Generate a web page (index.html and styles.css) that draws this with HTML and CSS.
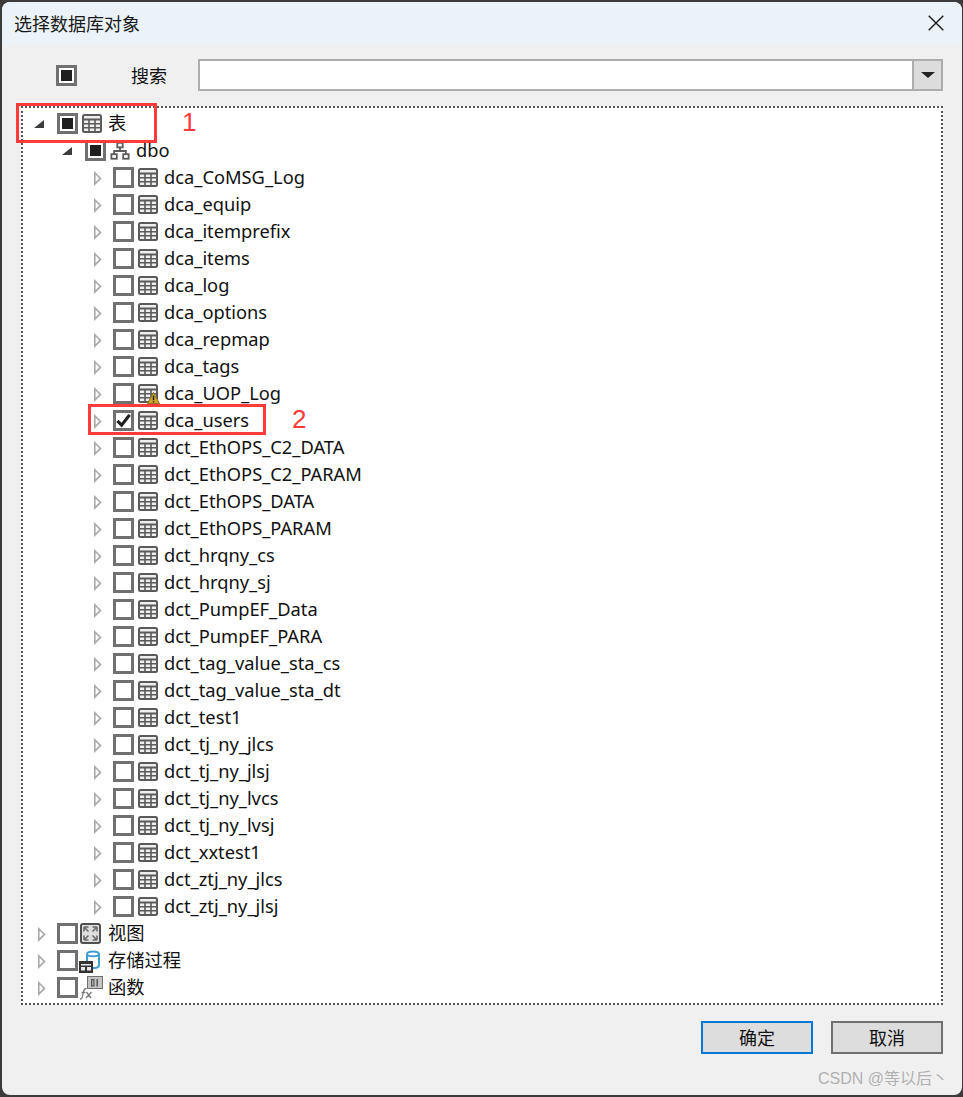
FILE: index.html
```html
<!DOCTYPE html>
<html lang="zh">
<head>
<meta charset="utf-8">
<title>选择数据库对象</title>
<link rel="stylesheet" href="styles.css">
</head>
<body>
<svg class="sprite" aria-hidden="true">
  <symbol id="open" viewBox="0 0 16 16"><path d="M12 4v8H2z" fill="#3c3c3c"/></symbol>
  <symbol id="closed" viewBox="0 0 16 16"><path d="M6.800 2.800 12.500 8.400 6.800 14z" fill="#fff" stroke="#a8a8a8" stroke-width="1.600"/></symbol>
  <symbol id="table" viewBox="0 0 20 20"><rect x="1" y="1" width="18" height="17" rx="1.500" fill="#efefef" stroke="#5a5a5a" stroke-width="2"/><path d="M1 5.500h18" stroke="#5a5a5a" stroke-width="2"/><path d="M1 9.800h18M1 13.800h18M7 5v13M13 5v13" stroke="#5a5a5a" stroke-width="1.600" fill="none"/></symbol>
  <symbol id="schema" viewBox="0 0 22 20"><g fill="#fff" stroke="#5c5c5c" stroke-width="2"><rect x="8" y="1" width="6" height="5"/><rect x="1.500" y="13.500" width="6" height="5"/><rect x="14.500" y="13.500" width="6" height="5"/><path d="M11 6v4M4.500 13.500V10h13v3.500" fill="none"/></g></symbol>
  <symbol id="warn" viewBox="0 0 14 13"><path d="M7 .5 13.500 12.500H.5z" fill="#d0a52a" stroke="#8a6a14"/><path d="M6.200 4h1.600v5H6.200zM6.200 10h1.600v1.500H6.200z" fill="#222"/></symbol>
  <symbol id="view" viewBox="0 0 24 24"><rect x="2" y="2" width="19" height="19" rx="2" fill="#dedede" stroke="#4f4f4f" stroke-width="2"/><path d="M5 5l4.500 4.500M5 5h4.500M5 5v4.500M18 5l-4.500 4.500M18 5h-4.500M18 5v4.500M5 18l4.500-4.500M5 18h4.500M5 18v-4.500M18 18l-4.500-4.500M18 18h-4.500M18 18v-4.500" fill="none" stroke="#6a6a6a" stroke-width="1.600"/></symbol>
  <symbol id="proc" viewBox="0 0 24 24"><path d="M8 5C8 1.500 20 1.500 20 5V16c0 2.500-3 3-5 3H8z" fill="#fff" stroke="#3f9ed1" stroke-width="2"/><path d="M8 5c0 3 12 3 12 0" fill="none" stroke="#3f9ed1" stroke-width="2"/><rect x="0" y="12" width="14" height="12" fill="#333"/><path fill="#e8e8e8" d="M2 15h10v1.500H2zM2 18h4v3.500H2zM8 18h4v3.500H8z"/></symbol>
  <symbol id="func" viewBox="0 0 24 24"><rect x="8.500" y=".5" width="15" height="12" fill="#c4c4c4" stroke="#6f6f6f"/><path d="M12 3h3.500v7.500H12zM13.200 4.300v5h1.100v-5zM17.500 3H19v7.500h-1.500z" fill="#555" fill-rule="evenodd"/><path d="M1 23c2 0 2.200-1 2.700-4L4.700 15c.4-1.600 1.200-2.500 2.800-2.500M2.500 16.500h4M7.500 16l4.500 6M12.500 16l-5.500 6" fill="none" stroke="#7a7a7a" stroke-width="1.300"/></symbol>
  <symbol id="tick" viewBox="0 0 16 16"><path d="M1.500 8.500 6 13l8.500-11" fill="none" stroke="#1f1f1f" stroke-width="3.400"/></symbol>
</svg>

<div class="window">
  <header class="titlebar">
    <span class="title">选择数据库对象</span>
    <svg class="close" viewBox="0 0 16 16"><path d="M.7.7l14.600 14.600M15.300.7.700 15.300" stroke="#1a1a1a" stroke-width="1.400" fill="none"/></svg>
  </header>

  <div class="search">
    <span class="check partial"></span>
    <span class="search-label">搜索</span>
    <div class="combo">
      <span class="combo-input"></span>
      <span class="combo-btn"><span class="caret"></span></span>
    </div>
  </div>

  <div class="tree">
    <div class="row lvl0"><svg class="arrow"><use href="#open"/></svg><span class="check partial"></span><svg class="ico"><use href="#table"/></svg><span class="name">表</span></div>
    <div class="row lvl1"><svg class="arrow"><use href="#open"/></svg><span class="check partial"></span><svg class="ico"><use href="#schema"/></svg><span class="name">dbo</span></div>
    <div class="row lvl2"><svg class="arrow"><use href="#closed"/></svg><span class="check"></span><svg class="ico"><use href="#table"/></svg><span class="name">dca_CoMSG_Log</span></div>
    <div class="row lvl2"><svg class="arrow"><use href="#closed"/></svg><span class="check"></span><svg class="ico"><use href="#table"/></svg><span class="name">dca_equip</span></div>
    <div class="row lvl2"><svg class="arrow"><use href="#closed"/></svg><span class="check"></span><svg class="ico"><use href="#table"/></svg><span class="name">dca_itemprefix</span></div>
    <div class="row lvl2"><svg class="arrow"><use href="#closed"/></svg><span class="check"></span><svg class="ico"><use href="#table"/></svg><span class="name">dca_items</span></div>
    <div class="row lvl2"><svg class="arrow"><use href="#closed"/></svg><span class="check"></span><svg class="ico"><use href="#table"/></svg><span class="name">dca_log</span></div>
    <div class="row lvl2"><svg class="arrow"><use href="#closed"/></svg><span class="check"></span><svg class="ico"><use href="#table"/></svg><span class="name">dca_options</span></div>
    <div class="row lvl2"><svg class="arrow"><use href="#closed"/></svg><span class="check"></span><svg class="ico"><use href="#table"/></svg><span class="name">dca_repmap</span></div>
    <div class="row lvl2"><svg class="arrow"><use href="#closed"/></svg><span class="check"></span><svg class="ico"><use href="#table"/></svg><span class="name">dca_tags</span></div>
    <div class="row lvl2"><svg class="arrow"><use href="#closed"/></svg><span class="check"></span><span class="ico-wrap"><svg class="ico"><use href="#table"/></svg><svg class="warn"><use href="#warn"/></svg></span><span class="name">dca_UOP_Log</span></div>
    <div class="row lvl2"><svg class="arrow"><use href="#closed"/></svg><span class="check checked"><svg class="tick"><use href="#tick"/></svg></span><svg class="ico"><use href="#table"/></svg><span class="name">dca_users</span></div>
    <div class="row lvl2"><svg class="arrow"><use href="#closed"/></svg><span class="check"></span><svg class="ico"><use href="#table"/></svg><span class="name">dct_EthOPS_C2_DATA</span></div>
    <div class="row lvl2"><svg class="arrow"><use href="#closed"/></svg><span class="check"></span><svg class="ico"><use href="#table"/></svg><span class="name">dct_EthOPS_C2_PARAM</span></div>
    <div class="row lvl2"><svg class="arrow"><use href="#closed"/></svg><span class="check"></span><svg class="ico"><use href="#table"/></svg><span class="name">dct_EthOPS_DATA</span></div>
    <div class="row lvl2"><svg class="arrow"><use href="#closed"/></svg><span class="check"></span><svg class="ico"><use href="#table"/></svg><span class="name">dct_EthOPS_PARAM</span></div>
    <div class="row lvl2"><svg class="arrow"><use href="#closed"/></svg><span class="check"></span><svg class="ico"><use href="#table"/></svg><span class="name">dct_hrqny_cs</span></div>
    <div class="row lvl2"><svg class="arrow"><use href="#closed"/></svg><span class="check"></span><svg class="ico"><use href="#table"/></svg><span class="name">dct_hrqny_sj</span></div>
    <div class="row lvl2"><svg class="arrow"><use href="#closed"/></svg><span class="check"></span><svg class="ico"><use href="#table"/></svg><span class="name">dct_PumpEF_Data</span></div>
    <div class="row lvl2"><svg class="arrow"><use href="#closed"/></svg><span class="check"></span><svg class="ico"><use href="#table"/></svg><span class="name">dct_PumpEF_PARA</span></div>
    <div class="row lvl2"><svg class="arrow"><use href="#closed"/></svg><span class="check"></span><svg class="ico"><use href="#table"/></svg><span class="name">dct_tag_value_sta_cs</span></div>
    <div class="row lvl2"><svg class="arrow"><use href="#closed"/></svg><span class="check"></span><svg class="ico"><use href="#table"/></svg><span class="name">dct_tag_value_sta_dt</span></div>
    <div class="row lvl2"><svg class="arrow"><use href="#closed"/></svg><span class="check"></span><svg class="ico"><use href="#table"/></svg><span class="name">dct_test1</span></div>
    <div class="row lvl2"><svg class="arrow"><use href="#closed"/></svg><span class="check"></span><svg class="ico"><use href="#table"/></svg><span class="name">dct_tj_ny_jlcs</span></div>
    <div class="row lvl2"><svg class="arrow"><use href="#closed"/></svg><span class="check"></span><svg class="ico"><use href="#table"/></svg><span class="name">dct_tj_ny_jlsj</span></div>
    <div class="row lvl2"><svg class="arrow"><use href="#closed"/></svg><span class="check"></span><svg class="ico"><use href="#table"/></svg><span class="name">dct_tj_ny_lvcs</span></div>
    <div class="row lvl2"><svg class="arrow"><use href="#closed"/></svg><span class="check"></span><svg class="ico"><use href="#table"/></svg><span class="name">dct_tj_ny_lvsj</span></div>
    <div class="row lvl2"><svg class="arrow"><use href="#closed"/></svg><span class="check"></span><svg class="ico"><use href="#table"/></svg><span class="name">dct_xxtest1</span></div>
    <div class="row lvl2"><svg class="arrow"><use href="#closed"/></svg><span class="check"></span><svg class="ico"><use href="#table"/></svg><span class="name">dct_ztj_ny_jlcs</span></div>
    <div class="row lvl2"><svg class="arrow"><use href="#closed"/></svg><span class="check"></span><svg class="ico"><use href="#table"/></svg><span class="name">dct_ztj_ny_jlsj</span></div>
    <div class="row lvl0"><svg class="arrow"><use href="#closed"/></svg><span class="check"></span><svg class="ico square"><use href="#view"/></svg><span class="name">视图</span></div>
    <div class="row lvl0"><svg class="arrow"><use href="#closed"/></svg><span class="check"></span><svg class="ico square"><use href="#proc"/></svg><span class="name">存储过程</span></div>
    <div class="row lvl0"><svg class="arrow"><use href="#closed"/></svg><span class="check"></span><svg class="ico square"><use href="#func"/></svg><span class="name">函数</span></div>
  </div>

  <footer class="actions">
    <button class="btn primary">确定</button>
    <button class="btn">取消</button>
  </footer>

  <div class="note box-one"></div>
  <span class="note-num num-one">1</span>
  <div class="note box-two"></div>
  <span class="note-num num-two">2</span>
  <span class="watermark">CSDN @等以后丶</span>
</div>
</body>
</html>
```
FILE: styles.css
```css
* { box-sizing: border-box; }
html, body { margin: 0; height: 100%; }
body {
  background: #3b3b3b;
  padding: 2px 1px 2px 2px;
  font-family: "Noto Sans", "Noto Sans CJK SC", sans-serif;
  font-size: 18.3px;
  color: #111;
  overflow: hidden;
}
.sprite { display: none; }
.window {
  position: relative;
  height: 1093px;
  background: #f0f0f0;
  border-radius: 8px;
  overflow: hidden;
  display: flex;
  flex-direction: column;
}
.titlebar {
  height: 43px;
  flex: none;
  background: #ebf3f9;
  display: flex;
  align-items: center;
  justify-content: space-between;
  padding: 0 18px 2px 12px;
}
.title { font-family: "Noto Sans CJK SC", sans-serif; font-size: 18px; color: #1a1a1a; }
.close { width: 16px; height: 16px; }
.search {
  display: flex;
  align-items: center;
  padding: 14px 19px 0 54px;
  flex: none;
}
.search-label { font-family: "Noto Sans CJK SC", sans-serif; font-size: 18px; margin-left: 54px; width: 67px; }
.combo {
  flex: 1;
  height: 32px;
  display: flex;
  border: 2px solid #adadad;
  background: #fff;
}
.combo-input { flex: 1; }
.combo-btn {
  width: 29px;
  background: #dcdcdc;
  border-left: 2px solid #adadad;
  display: flex;
  align-items: center;
  justify-content: center;
}
.caret {
  width: 0;
  height: 0;
  border-left: 7px solid transparent;
  border-right: 7px solid transparent;
  border-top: 6px solid #222;
}
.tree {
  margin: 15px 19px 0 19px;
  height: 899px;
  flex: none;
  border: 2px dotted #555;
  background: #fff;
  padding-top: 2px;
  overflow: hidden;
}
.row { height: 27px; display: flex; align-items: center; }
.lvl0 { padding-left: 9px; }
.lvl1 { padding-left: 37px; }
.lvl2 { padding-left: 65px; }
.arrow { width: 16px; height: 16px; flex: none; margin-right: 9px; }
.check {
  width: 21px;
  height: 21px;
  flex: none;
  border: 3px solid #707070;
  background: #fff;
  display: flex;
  align-items: center;
  justify-content: center;
}
.check.partial::before {
  content: "";
  width: 11px;
  height: 11px;
  background: #1f1f1f;
}
.tick { width: 15px; height: 15px; flex: none; }
.ico { width: 20px; height: 20px; flex: none; margin-left: 4px; }
.ico.square { width: 24px; height: 24px; margin-left: 1px; }
.ico-wrap { position: relative; display: flex; flex: none; }
.warn { position: absolute; left: 13px; top: 8px; width: 13px; height: 12px; }
.name { margin-left: 6px; white-space: nowrap; line-height: 25px; padding-bottom: 2px; }
.ico.square + .name { margin-left: 5px; }
.actions {
  display: flex;
  justify-content: flex-end;
  gap: 18px;
  padding: 16px 19px 0 0;
}
.btn {
  width: 112px;
  height: 33px;
  background: #dddddd;
  border: 2px solid #707070;
  font: 18px "Noto Sans CJK SC", sans-serif;
  color: #111;
  padding: 0 0 2px;
}
.btn.primary { border-color: #0078d4; }
.note { position: absolute; border: 3px solid #ff3b3b; }
.box-one { left: 14px; top: 101px; width: 141px; height: 40px; }
.box-two { left: 86px; top: 402px; width: 178px; height: 31px; }
.note-num {
  position: absolute;
  color: #ff3b3b;
  font-family: "Liberation Sans", sans-serif;
  font-size: 26px;
  line-height: 30px;
}
.num-one { left: 180px; top: 105px; }
.num-two { left: 290px; top: 402px; }
.watermark {
  position: absolute;
  right: 14px;
  top: 1065px;
  color: #b0b0b0;
  font-family: "Liberation Sans", "Noto Sans CJK SC", sans-serif;
  font-size: 16px;
  line-height: 24px;
}
```
